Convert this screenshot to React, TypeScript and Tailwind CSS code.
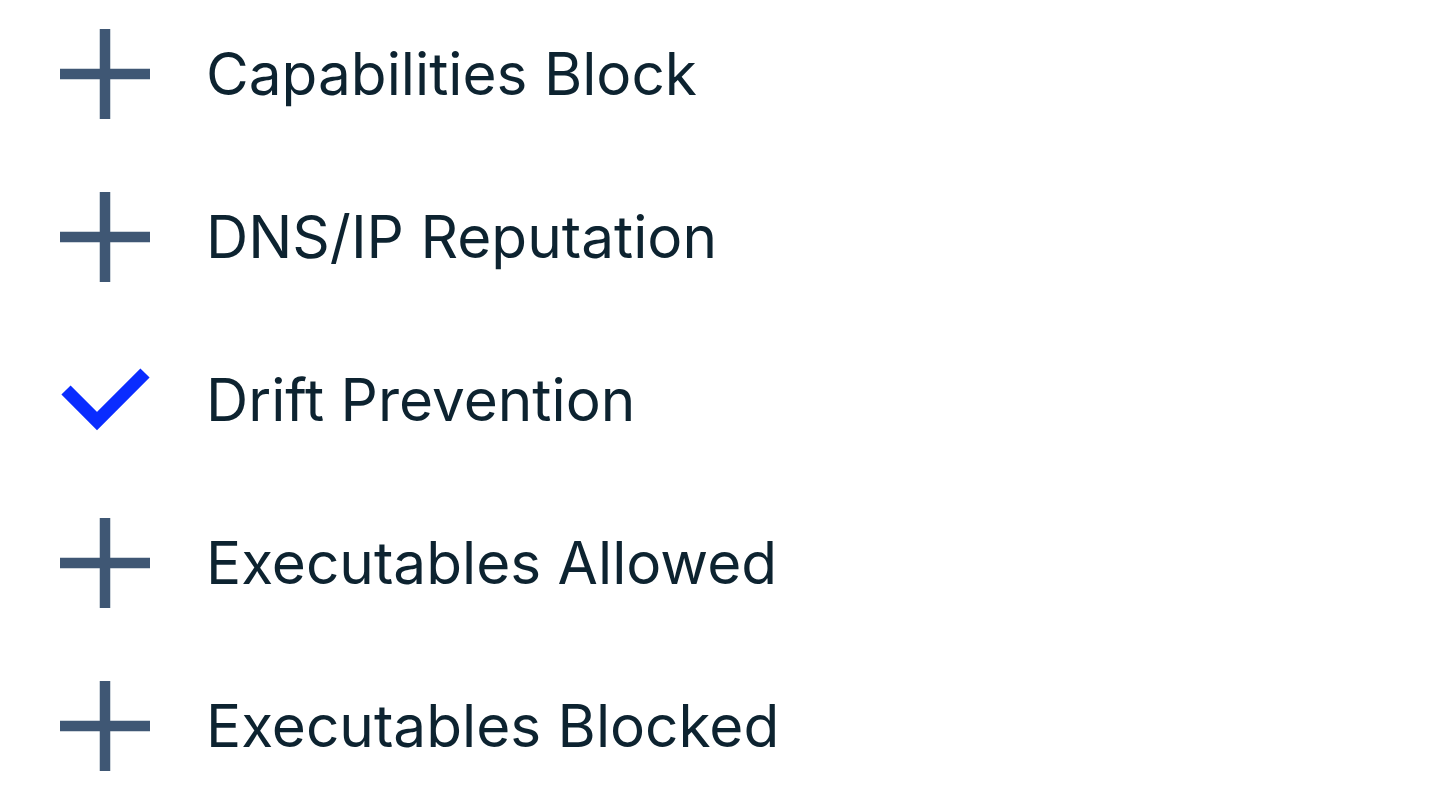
import React from "react";

const items = [
  { id: 1, title: "Capabilities Block", checked: false },
  { id: 2, title: "DNS/IP Reputation", checked: false },
  { id: 3, title: "Drift Prevention", checked: true },
  { id: 4, title: "Executables Allowed", checked: false },
  { id: 5, title: "Executables Blocked", checked: false },
];

const PlusIcon = () => (
  <svg width="90" height="90" viewBox="0 0 90 90" className="shrink-0">
    <path d="M45 0V90M0 45H90" stroke="#3f5774" strokeWidth="10.5" fill="none" />
  </svg>
);

const CheckIcon = () => (
  <svg width="90" height="90" viewBox="0 0 90 90" className="shrink-0">
    <path
      d="M6 35L37 66L85 18"
      stroke="#0a2cff"
      strokeWidth="13"
      fill="none"
      strokeLinejoin="miter"
    />
  </svg>
);

export default function App() {
  return (
    <div className="w-[1440px] h-[810px] bg-white overflow-hidden pt-[29px] pl-[60px] font-['Inter',sans-serif]">
      <div className="flex flex-col gap-[73px]">
        {items.map(({ id, title, checked }) => (
          <div key={id} className="flex items-center gap-[56px] h-[90px]">
            {checked ? <CheckIcon /> : <PlusIcon />}
            <p className="text-[58.5px] leading-none text-[#0d2330]">{title}</p>
          </div>
        ))}
      </div>
    </div>
  );
}
